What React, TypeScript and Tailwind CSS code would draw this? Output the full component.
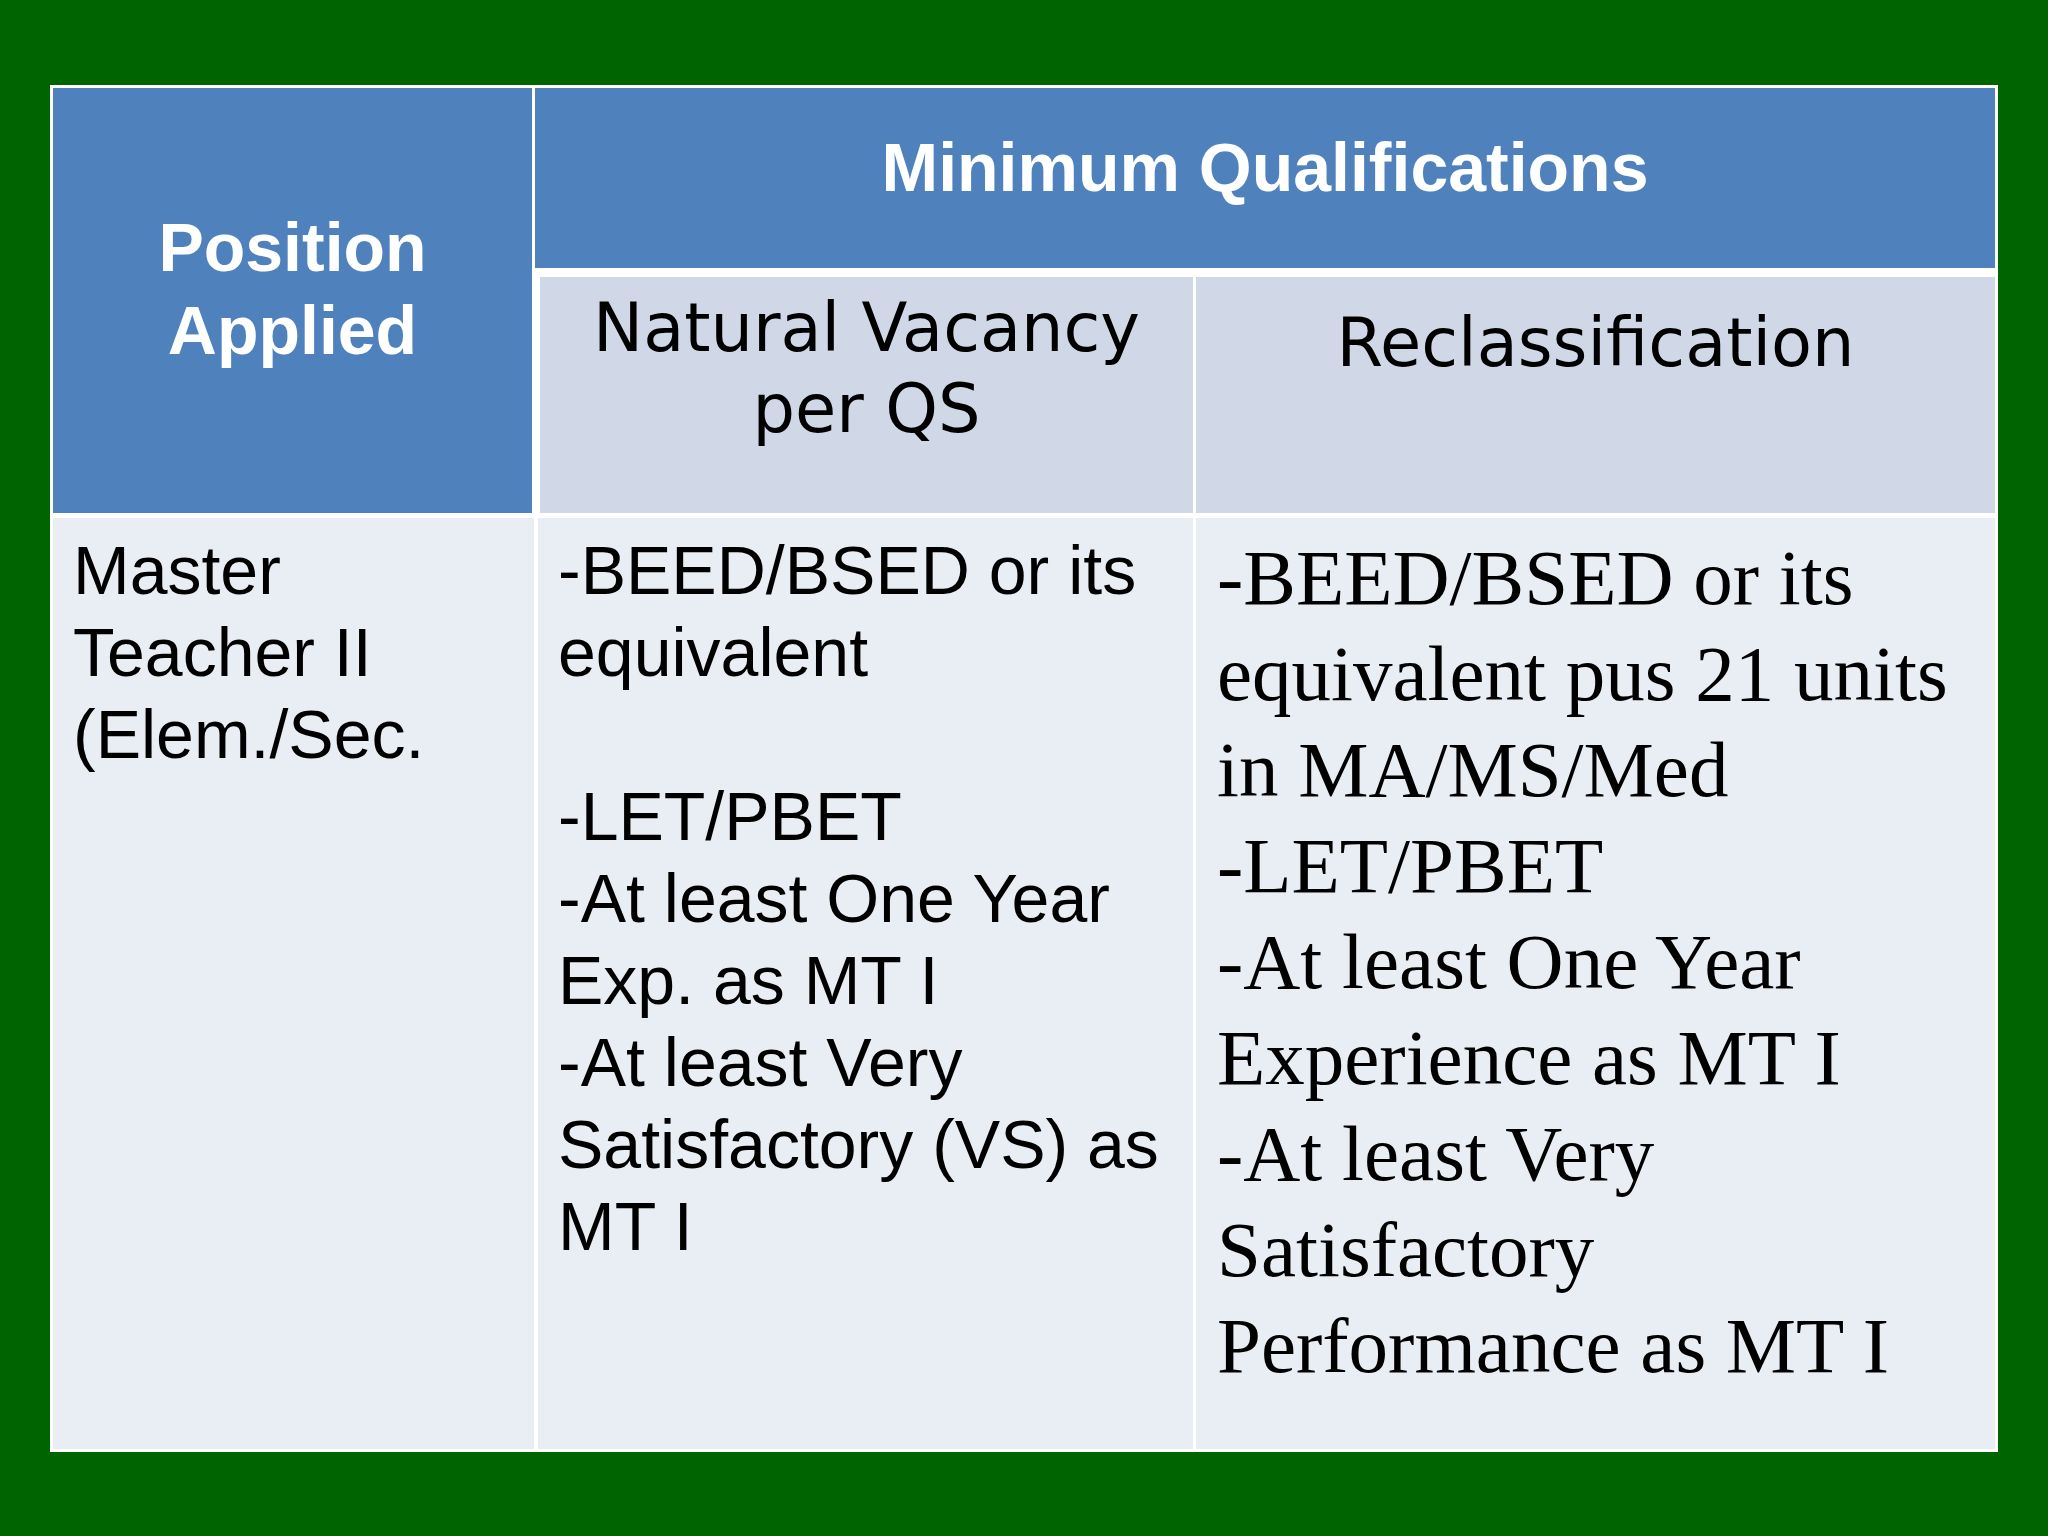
export default function App() {
  return (
    <div className="w-[2048px] h-[1536px] bg-[#006400] pl-[50px] pt-[85px] overflow-hidden">
      <div className="w-[1948px] h-[1367px] bg-white p-[3px] flex flex-col gap-[5px]">
        <div className="flex h-[425px] gap-[3px]">
          <div className="w-[479px] bg-[#4F81BD] pt-[118px] text-center text-white font-bold text-[68px] leading-[83px] font-['Liberation_Sans',Arial,sans-serif]">
            <div>Position</div>
            <div>Applied</div>
          </div>
          <div className="flex-1 flex flex-col gap-[9px]">
            <div className="h-[180px] bg-[#4F81BD] pt-[38px] text-center text-white font-bold text-[68px] leading-[82px] font-['Liberation_Sans',Arial,sans-serif] whitespace-nowrap">
              Minimum Qualifications
            </div>
            <div className="flex-1 flex gap-[3px] ml-[5px]">
              <div className="w-[653px] bg-[#D0D8E8] pt-[11px] text-center text-black text-[67px] leading-[81px] font-['DejaVu_Sans',sans-serif] whitespace-nowrap">
                <div>Natural Vacancy</div>
                <div>per QS</div>
              </div>
              <div className="flex-1 bg-[#D0D8E8] pt-[26px] text-center text-black text-[67px] leading-[81px] font-['DejaVu_Sans',sans-serif] whitespace-nowrap">
                Reclassification
              </div>
            </div>
          </div>
        </div>
        <div className="flex-1 flex">
          <div className="w-[481px] bg-[#E9EDF4] pl-[20px] pt-[11px] text-black text-[68px] leading-[82px] font-['Liberation_Sans',Arial,sans-serif] whitespace-nowrap">
            <div>Master</div>
            <div>Teacher II</div>
            <div>(Elem./Sec.</div>
          </div>
          <div className="w-[655px] ml-[4px] bg-[#E9EDF4] pl-[20px] pt-[11px] text-black text-[68px] leading-[82px] font-['Liberation_Sans',Arial,sans-serif] whitespace-nowrap">
            <div>-BEED/BSED or its</div>
            <div>equivalent</div>
            <div className="h-[82px]"></div>
            <div>-LET/PBET</div>
            <div>-At least One Year</div>
            <div>Exp. as MT I</div>
            <div>-At least Very</div>
            <div>Satisfactory (VS) as</div>
            <div>MT I</div>
          </div>
          <div className="flex-1 ml-[3px] bg-[#E9EDF4] pl-[21px] pt-[12px] text-black text-[79px] leading-[96px] font-['Liberation_Serif','Times_New_Roman',serif] whitespace-nowrap">
            <div>-BEED/BSED or its</div>
            <div>equivalent pus 21 units</div>
            <div>in MA/MS/Med</div>
            <div>-LET/PBET</div>
            <div>-At least One Year</div>
            <div>Experience as MT I</div>
            <div>-At least Very</div>
            <div>Satisfactory</div>
            <div>Performance as MT I</div>
          </div>
        </div>
      </div>
    </div>
  );
}
